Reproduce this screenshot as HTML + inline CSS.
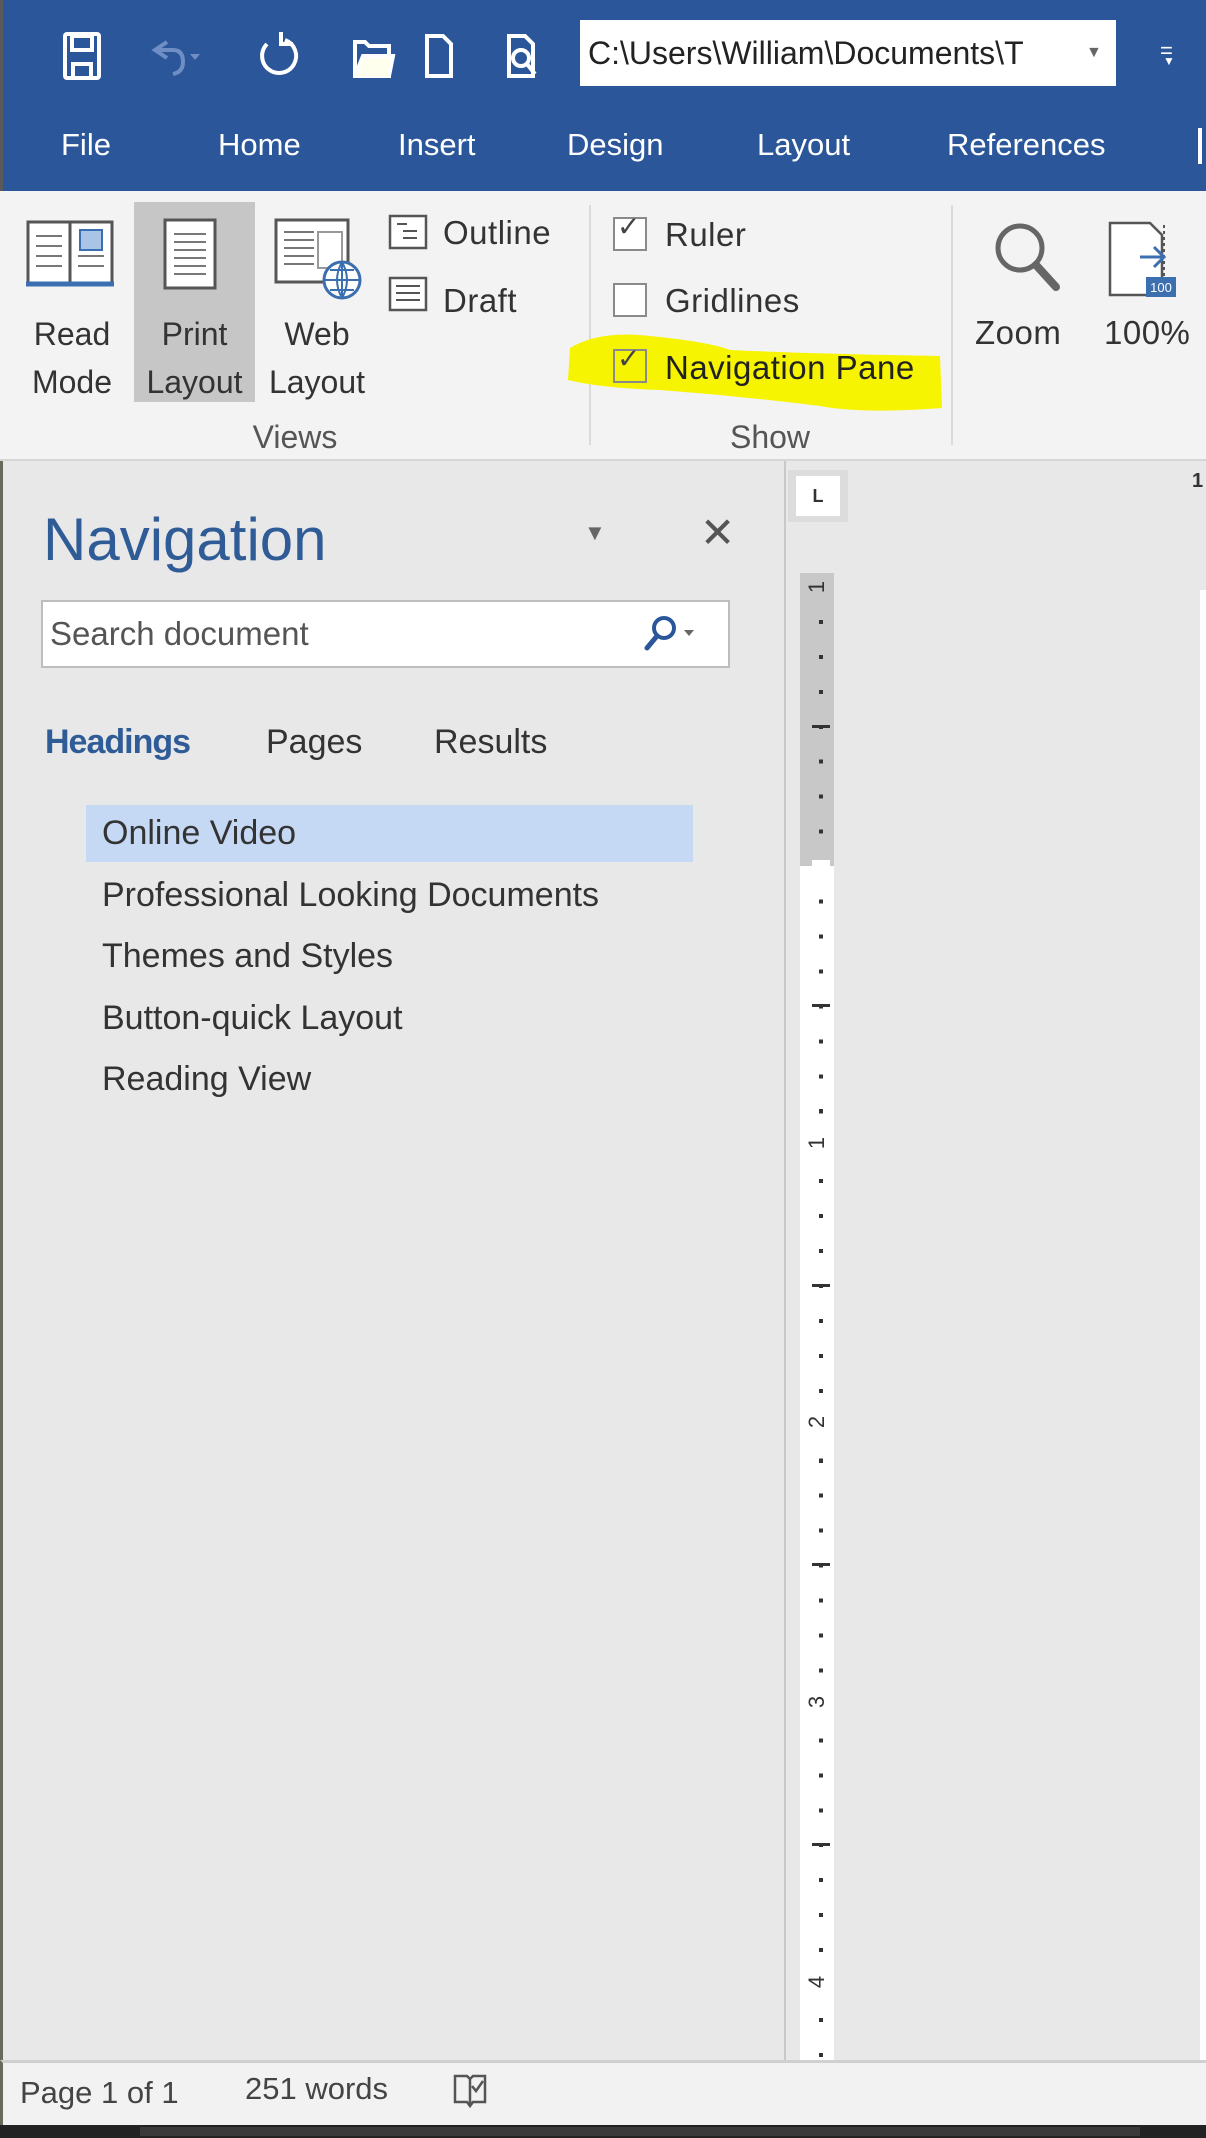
<!DOCTYPE html>
<html><head><meta charset="utf-8"><style>
*{margin:0;padding:0;box-sizing:border-box}
body{width:1206px;height:2138px;overflow:hidden;background:#e8e8e8;font-family:"Liberation Sans",sans-serif;position:relative;color:#333}
.a{position:absolute;white-space:nowrap}
.top{left:0;top:0;width:1206px;height:191px;background:#2b579a;border-left:3px solid #5a5a5a}
.tab{color:#fff;font-size:31px;top:127px}
.rib{left:0;top:191px;width:1206px;height:270px;background:#f3f3f3;border-bottom:2px solid #d6d6d6}
.lbl{font-size:32px;color:#333;line-height:48px;text-align:center}
.rt{font-size:33px;letter-spacing:0.5px}
.cb{width:34px;height:34px;border:2px solid #8a8a8a;background:#fff}
.nav{left:0;top:461px;width:786px;height:1599px;background:#e8e8e8;border-right:2px solid #c8c8c8;border-left:3px solid #6a6a5a}
.item{font-size:34px;color:#333;left:102px}
.ruler{left:800px;top:573px;width:34px;height:1487px;background:#fff}
.num{font-size:22px;color:#333;left:806px;width:22px;text-align:center;transform:rotate(-90deg);background:#fff;line-height:22px}
</style></head><body>
<div class="a top"></div>
<svg class="a" style="left:55px;top:28px" width="560" height="56" viewBox="0 0 560 56" fill="none" stroke="#fff" stroke-width="4">
<rect x="10" y="6" width="34" height="44" rx="2"/><rect x="17" y="8" width="20" height="14"/><rect x="18" y="36" width="18" height="14"/>
<path d="M112 14 L100 22 L112 30 M100 22 H118 Q128 22 128 34 Q128 44 118 46" stroke="#6f8fc4"/><path d="M135 26 l5 6 l5 -6z" fill="#6f8fc4" stroke="none"/>
<path d="M230 12 A17 17 0 1 1 212 16" /><path d="M226 4 L226 16 L238 16" />
<path d="M300 14 h10 l4 4 h20 v30 h-34z"/><path d="M300 48 l8 -20 h30 l-4 20" fill="#ffe" />
<path d="M372 8 h16 l8 8 v32 h-24z"/>
<path d="M454 8 h16 l8 8 v32 h-24z"/><circle cx="466" cy="30" r="8"/><path d="M472 36 l8 10"/>
</svg>
<div class="a" style="left:580px;top:20px;width:536px;height:66px;background:#fff;font-size:32px;line-height:66px;padding-left:8px;color:#222;overflow:hidden">C:\Users\William\Documents\T<span style="position:absolute;left:506px;font-size:16px;color:#666">▼</span></div>
<div class="a" style="left:1160px;top:38px;color:#fff;font-size:22px">=</div><div class="a" style="left:1163px;top:54px;color:#fff;font-size:12px">▼</div>
<div class="a tab" style="left:61px">File</div>
<div class="a tab" style="left:218px">Home</div>
<div class="a tab" style="left:398px">Insert</div>
<div class="a tab" style="left:567px">Design</div>
<div class="a tab" style="left:757px">Layout</div>
<div class="a tab" style="left:947px">References</div>
<div class="a" style="left:1198px;top:128px;width:4px;height:36px;background:#fff"></div>

<div class="a rib"></div>
<div class="a" style="left:134px;top:202px;width:121px;height:200px;background:#c6c6c6"></div>
<svg class="a" style="left:20px;top:210px" width="360" height="100" viewBox="0 0 360 100" fill="none" stroke="#555" stroke-width="3">
<path d="M8 12 h42 v62 h-42z M50 12 h42 v62 h-42z" fill="#fff"/><path d="M6 74 h88" stroke="#3b6fb0" stroke-width="5"/>
<path d="M16 26h26M16 36h26M16 46h26M16 56h26M58 46h26M58 56h26" stroke="#777" stroke-width="2"/><rect x="60" y="20" width="22" height="20" fill="#a9c4e4" stroke="#3b6fb0" stroke-width="2"/>
<rect x="145" y="10" width="50" height="68" fill="#fff"/><path d="M154 24h32M154 32h32M154 40h32M154 48h32M154 56h32M154 64h32" stroke="#777" stroke-width="2"/>
<rect x="256" y="10" width="72" height="62" fill="#fff"/><path d="M264 22h30M264 30h30M264 38h30M264 46h30M264 54h30" stroke="#777" stroke-width="2"/><rect x="298" y="22" width="24" height="36" fill="#fff" stroke="#999" stroke-width="2"/>
<circle cx="322" cy="70" r="18" fill="#fff" stroke="#3b6fb0"/><path d="M304 70h36M322 52v36M310 60h24M310 80h24M322 52q-10 18 0 36M322 52q10 18 0 36" stroke="#3b6fb0" stroke-width="2"/>
</svg>
<div class="a lbl" style="left:14px;top:310px;width:116px">Read<br>Mode</div>
<div class="a lbl" style="left:131px;top:310px;width:127px">Print<br>Layout</div>
<div class="a lbl" style="left:256px;top:310px;width:122px">Web<br>Layout</div>
<svg class="a" style="left:388px;top:214px" width="44" height="100" viewBox="0 0 44 100" fill="#fff" stroke="#555" stroke-width="2.5">
<rect x="2" y="2" width="36" height="32"/><path d="M9 10h10M15 17h14M15 24h14" stroke-width="2"/>
<rect x="2" y="64" width="36" height="32"/><path d="M8 72h24M8 79h24M8 86h24" stroke-width="2"/></svg>
<div class="a rt" style="left:443px;top:214px">Outline</div>
<div class="a rt" style="left:443px;top:282px">Draft</div>
<div class="a lbl" style="left:230px;top:413px;width:130px;color:#555">Views</div>
<div class="a" style="left:589px;top:205px;width:2px;height:240px;background:#dadada"></div>
<div class="a" style="left:951px;top:205px;width:2px;height:240px;background:#dadada"></div>
<svg class="a" style="left:560px;top:328px" width="390" height="86" viewBox="0 0 390 86"><path d="M10 20 Q40 2 90 8 Q150 14 170 22 Q260 26 380 28 L382 80 Q300 86 260 78 Q180 68 100 62 Q40 60 8 52 Z" fill="#f6f400"/></svg>
<div class="a cb" style="left:613px;top:217px"></div><div class="a" style="left:617px;top:210px;font-size:28px;color:#444">✓</div>
<div class="a cb" style="left:613px;top:283px"></div>
<div class="a cb" style="left:613px;top:349px;background:transparent"></div><div class="a" style="left:617px;top:342px;font-size:28px;color:#444">✓</div>
<div class="a rt" style="left:665px;top:216px">Ruler</div>
<div class="a rt" style="left:665px;top:282px">Gridlines</div>
<div class="a rt" style="left:665px;top:349px;color:#222">Navigation Pane</div>
<div class="a lbl" style="left:700px;top:413px;width:140px;color:#555">Show</div>
<svg class="a" style="left:980px;top:215px" width="220" height="100" viewBox="0 0 220 100" fill="none">
<circle cx="40" cy="33" r="22" stroke="#666" stroke-width="5"/><path d="M56 50 L76 72" stroke="#666" stroke-width="8" stroke-linecap="round"/>
<path d="M130 8 h40 l12 12 v60 h-52z" fill="#fff" stroke="#555" stroke-width="2.5"/><path d="M184 10 v60" stroke="#555" stroke-width="2" stroke-dasharray="3 3"/>
<path d="M160 42 h24 M174 32 l10 10 l-10 10" stroke="#3b6fb0" stroke-width="3"/><rect x="166" y="62" width="30" height="20" fill="#3b6fb0"/><text x="181" y="77" font-size="13" fill="#fff" text-anchor="middle" font-family="Liberation Sans">100</text></svg>
<div class="a rt" style="left:975px;top:314px">Zoom</div>
<div class="a rt" style="left:1104px;top:314px">100%</div>

<div class="a nav"></div>
<div class="a" style="left:43px;top:505px;font-size:60px;color:#2f5b96">Navigation</div>
<div class="a" style="left:584px;top:520px;font-size:22px;color:#666">▼</div>
<div class="a" style="left:700px;top:508px;font-size:42px;color:#555">✕</div>
<div class="a" style="left:41px;top:600px;width:689px;height:68px;background:#fff;border:2px solid #bdbdbd"></div>
<div class="a" style="left:50px;top:615px;font-size:33px;color:#555">Search document</div>
<svg class="a" style="left:638px;top:612px" width="60" height="44" viewBox="0 0 60 44"><circle cx="26" cy="16" r="10" fill="none" stroke="#2b579a" stroke-width="4"/><path d="M19 24 L9 36" stroke="#2b579a" stroke-width="5" stroke-linecap="round"/><path d="M46 18 l5 6 l5 -6z" fill="#666"/></svg>
<div class="a" style="left:45px;top:723px;font-size:34px;font-weight:bold;color:#2f5b96;letter-spacing:-1px">Headings</div>
<div class="a" style="left:266px;top:723px;font-size:34px;color:#333">Pages</div>
<div class="a" style="left:434px;top:723px;font-size:34px;color:#333">Results</div>
<div class="a" style="left:86px;top:805px;width:607px;height:57px;background:#c5d9f4"></div>
<div class="a item" style="top:814px">Online Video</div>
<div class="a item" style="top:876px">Professional Looking Documents</div>
<div class="a item" style="top:937px">Themes and Styles</div>
<div class="a item" style="top:999px">Button-quick Layout</div>
<div class="a item" style="top:1060px">Reading View</div>

<div class="a" style="left:788px;top:470px;width:60px;height:52px;background:#dcdcdc"></div>
<div class="a" style="left:796px;top:476px;width:44px;height:40px;background:#fff;font-size:18px;font-weight:bold;text-align:center;line-height:40px">L</div>
<div class="a ruler"></div>
<div class="a" style="left:800px;top:573px;width:34px;height:293px;background:#c8c8c8"></div>
<div class="a" style="left:819px;top:585px;width:4px;height:1475px;background:repeating-linear-gradient(#333 0 4px,transparent 4px 34.95px)"></div>
<div class="a" style="left:812px;top:725px;width:18px;height:3px;background:#333"></div>
<div class="a" style="left:812px;top:1004px;width:18px;height:3px;background:#333"></div>
<div class="a" style="left:812px;top:1284px;width:18px;height:3px;background:#333"></div>
<div class="a" style="left:812px;top:1563px;width:18px;height:3px;background:#333"></div>
<div class="a" style="left:812px;top:1843px;width:18px;height:3px;background:#333"></div>
<div class="a num" style="top:576px;background:#c8c8c8">1</div>
<div class="a" style="left:812px;top:860px;width:18px;height:12px;background:#fff"></div>
<div class="a num" style="top:1132px">1</div>
<div class="a num" style="top:1411px">2</div>
<div class="a num" style="top:1691px">3</div>
<div class="a num" style="top:1971px">4</div>
<div class="a" style="left:1192px;top:470px;font-size:20px;font-weight:bold">1</div>
<div class="a" style="left:1200px;top:590px;width:6px;height:1470px;background:#fff"></div>

<div class="a" style="left:0;top:2060px;width:1206px;height:65px;background:#f2f2f2;border-top:3px solid #d0d0d0;border-left:3px solid #6a6a5a"></div>
<div class="a" style="left:20px;top:2075px;font-size:31px;color:#444">Page 1 of 1</div>
<div class="a" style="left:245px;top:2071px;font-size:31px;color:#444">251 words</div>
<svg class="a" style="left:452px;top:2072px" width="36" height="40" viewBox="0 0 36 40" fill="none" stroke="#555" stroke-width="2.5"><path d="M3 4 h12 l3 3 l3-3 h12 v26 h-12 l-3 4 l-3-4 h-12z M18 7 v26"/><path d="M20 14 l4 5 l7 -10" stroke="#555"/></svg>
<div class="a" style="left:0;top:2125px;width:1206px;height:13px;background:#222"></div>
<div class="a" style="left:140px;top:2127px;width:1000px;height:9px;background:#3a3a3a"></div>
</body></html>
